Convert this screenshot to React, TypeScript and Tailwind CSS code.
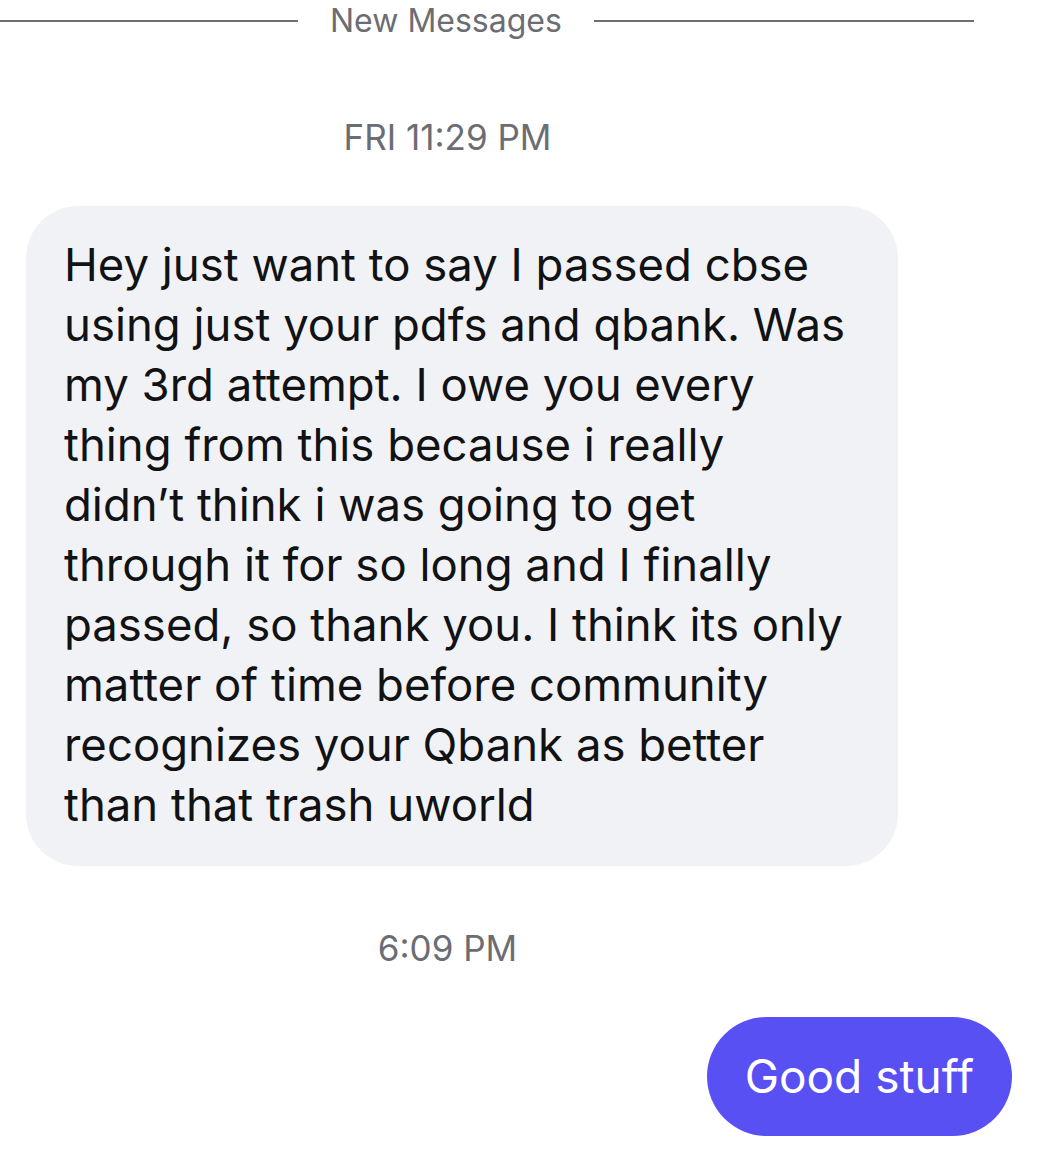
const lines = [
  "Hey just want to say I passed cbse",
  "using just your pdfs and qbank. Was",
  "my 3rd attempt. I owe you every",
  "thing from this because i really",
  "didn’t think i was going to get",
  "through it for so long and I finally",
  "passed, so thank you. I think its only",
  "matter of time before community",
  "recognizes your Qbank as better",
  "than that trash uworld",
];

function Timestamp({ children }: { children: React.ReactNode }) {
  return (
    <div className="w-[895px] text-center text-[35px] leading-[40px] text-[#6b6d72]">{children}</div>
  );
}

export default function App() {
  return (
    <div className="w-[1037px] h-[1152px] bg-white font-['Inter','Roboto',sans-serif] overflow-hidden">
      <div className="flex items-center h-[42px]">
        <div className="w-[298px] h-[2px] bg-[#6c6e72]" />
        <span className="px-[32px] text-[32px] leading-[42px] text-[#6b6d72] whitespace-nowrap">New Messages</span>
        <div className="w-[380px] h-[2px] bg-[#6c6e72]" />
      </div>

      <div className="mt-[75px]">
        <Timestamp>FRI 11:29 PM</Timestamp>
      </div>

      <div className="mt-[49px] ml-[26px] w-[872px] rounded-[52px] bg-[#f1f2f5] pl-[38px] pt-[29px] pb-[31px]">
        {lines.map((line, i) => (
          <div key={i} className="text-[45.5px] leading-[60px] text-[#111214] whitespace-nowrap">
            {line}
          </div>
        ))}
      </div>

      <div className="mt-[62px]">
        <Timestamp>6:09 PM</Timestamp>
      </div>

      <div className="mt-[49px] flex justify-end pr-[25px]">
        <div className="h-[119px] px-[38px] rounded-full bg-[#5950f4] flex items-center text-[46px] text-white">
          Good stuff
        </div>
      </div>
    </div>
  );
}
